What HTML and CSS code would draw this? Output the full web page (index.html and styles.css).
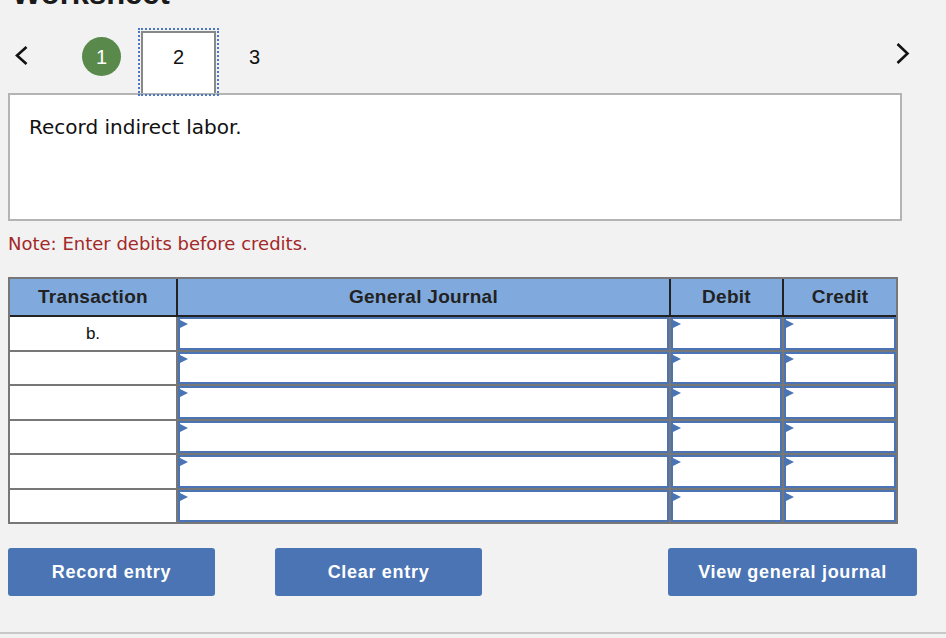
FILE: index.html
```html
<!DOCTYPE html>
<html lang="en">
<head>
<meta charset="utf-8">
<title>Worksheet</title>
<link rel="stylesheet" href="styles.css">
</head>
<body>
<div class="page">
  <h1 class="title">Worksheet</h1>
  <nav class="steps">
    <svg class="chev chev-left" width="14" height="19" viewBox="0 0 14 19"><polyline points="12.5,1 3,9.5 12.5,18" fill="none" stroke="#111" stroke-width="2.6"/></svg>
    <span class="step step-done">1</span>
    <span class="step step-current">2</span>
    <span class="step step-next">3</span>
    <svg class="chev chev-right" width="14" height="21" viewBox="0 0 14 21"><polyline points="1.5,1 11.5,10.5 1.5,20" fill="none" stroke="#111" stroke-width="2.6"/></svg>
  </nav>
  <div class="question">
    <p class="question-text">Record indirect labor.</p>
  </div>
  <p class="note">Note: Enter debits before credits.</p>
  <table class="journal">
    <thead>
      <tr>
        <th class="col-tx">Transaction</th>
        <th class="col-gj">General Journal</th>
        <th class="col-dr">Debit</th>
        <th class="col-cr">Credit</th>
      </tr>
    </thead>
    <tbody>
      <tr>
        <td class="tx"><div class="tx-label">b.</div></td>
        <td><div class="field"></div></td>
        <td><div class="field"></div></td>
        <td class="last"><div class="field"></div></td>
      </tr>
      <tr>
        <td class="tx"><div class="tx-label"></div></td>
        <td><div class="field"></div></td>
        <td><div class="field"></div></td>
        <td class="last"><div class="field"></div></td>
      </tr>
      <tr>
        <td class="tx"><div class="tx-label"></div></td>
        <td><div class="field"></div></td>
        <td><div class="field"></div></td>
        <td class="last"><div class="field"></div></td>
      </tr>
      <tr>
        <td class="tx"><div class="tx-label"></div></td>
        <td><div class="field"></div></td>
        <td><div class="field"></div></td>
        <td class="last"><div class="field"></div></td>
      </tr>
      <tr>
        <td class="tx"><div class="tx-label"></div></td>
        <td><div class="field"></div></td>
        <td><div class="field"></div></td>
        <td class="last"><div class="field"></div></td>
      </tr>
      <tr>
        <td class="tx"><div class="tx-label"></div></td>
        <td><div class="field"></div></td>
        <td><div class="field"></div></td>
        <td class="last"><div class="field"></div></td>
      </tr>
    </tbody>
  </table>
  <div class="actions">
    <button class="btn btn-record">Record entry</button>
    <button class="btn btn-clear">Clear entry</button>
    <button class="btn btn-view">View general journal</button>
  </div>
</div>
<div class="footer-line"></div>
</body>
</html>
```

FILE: styles.css
```css
html, body {
  margin: 0;
  padding: 0;
  background: #f2f2f2;
}

body {
  font-family: "Liberation Sans", Arial, sans-serif;
  color: #111;
  overflow: hidden;
}

.page {
  padding: 0 8px;
}

.title {
  margin: -24px 0 0 4px;
  font-size: 31px;
  line-height: 36px;
  font-weight: bold;
  color: #1a1a1a;
}

.steps {
  display: flex;
  align-items: flex-start;
  height: 62px;
  margin-top: 19px;
  padding-right: 28px;
}

.chev-left {
  margin: 15px 0 0 6px;
}

.chev-right {
  margin: 12px 0 0 auto;
}

.step {
  font-size: 20px;
  line-height: 24px;
  color: #111;
}

.step-done {
  width: 39px;
  height: 39px;
  margin: 6px 0 0 54px;
  border-radius: 50%;
  background: #5a8a4b;
  color: #fff;
  display: flex;
  align-items: center;
  justify-content: center;
}

.step-current {
  box-sizing: border-box;
  width: 75px;
  height: 62px;
  margin-left: 20px;
  padding-top: 12px;
  text-align: center;
  background: #fff;
  border: 2px solid #888;
  border-bottom: none;
  outline: 2px dotted #4a78c4;
  outline-offset: 1px;
}

.step-next {
  margin: 14px 0 0 33px;
}

.question {
  box-sizing: border-box;
  width: 894px;
  height: 128px;
  background: #fff;
  border: 2px solid #b4b4b4;
  padding: 20px 19px;
}

.question-text {
  margin: 0;
  font-family: "DejaVu Sans", Verdana, sans-serif;
  font-size: 20px;
  line-height: 24px;
  color: #111;
}

.note {
  margin: 13px 0 0;
  font-family: "DejaVu Sans", Verdana, sans-serif;
  font-size: 18px;
  line-height: 20px;
  color: #a32828;
}

.journal {
  margin-top: 23px;
  width: 890px;
  border-collapse: separate;
  border-spacing: 0;
  border: 2px solid #777;
  table-layout: fixed;
  background: #fff;
}

.journal th {
  box-sizing: border-box;
  height: 38px;
  padding: 0;
  background: #80aadd;
  color: #222;
  font-size: 19px;
  letter-spacing: 0.3px;
  font-weight: bold;
  text-align: center;
  border-right: 2px solid #222;
  border-bottom: 2px solid #222;
}

.journal th.col-cr {
  border-right: none;
}

.col-tx { width: 168px; }
.col-gj { width: 493px; }
.col-dr { width: 113px; }
.col-cr { width: 112px; }

.journal td {
  padding: 0;
  vertical-align: top;
  border-right: 2px solid #777;
  border-bottom: 2px solid #777;
}

.journal td.last {
  border-right: none;
}

.journal tbody tr:last-child td {
  border-bottom: none;
}

.tx-label {
  padding-top: 7px;
  font-size: 17px;
  line-height: 20px;
  text-align: center;
  color: #111;
}

.field {
  position: relative;
  box-sizing: border-box;
  height: 33px;
  border: 2px solid #4a74b4;
  background: #fff;
}

.journal tbody tr:nth-child(even) .field {
  height: 32px;
}

.field::before {
  content: "";
  position: absolute;
  left: -2px;
  top: 0;
  border-left: 10px solid #4a74b4;
  border-top: 5px solid transparent;
  border-bottom: 5px solid transparent;
}

.actions {
  display: flex;
  margin-top: 24px;
}

.btn {
  height: 48px;
  padding: 0;
  border: none;
  border-radius: 3px;
  background: #4a74b4;
  color: #fff;
  font-family: "Liberation Sans", Arial, sans-serif;
  font-size: 18px;
  font-weight: bold;
  letter-spacing: 0.7px;
}

.btn-record { width: 207px; }
.btn-clear { width: 207px; margin-left: 60px; }
.btn-view { width: 249px; margin-left: 186px; }

.footer-line {
  margin-top: 36px;
  border-top: 2px solid #c8c8c8;
}
```
